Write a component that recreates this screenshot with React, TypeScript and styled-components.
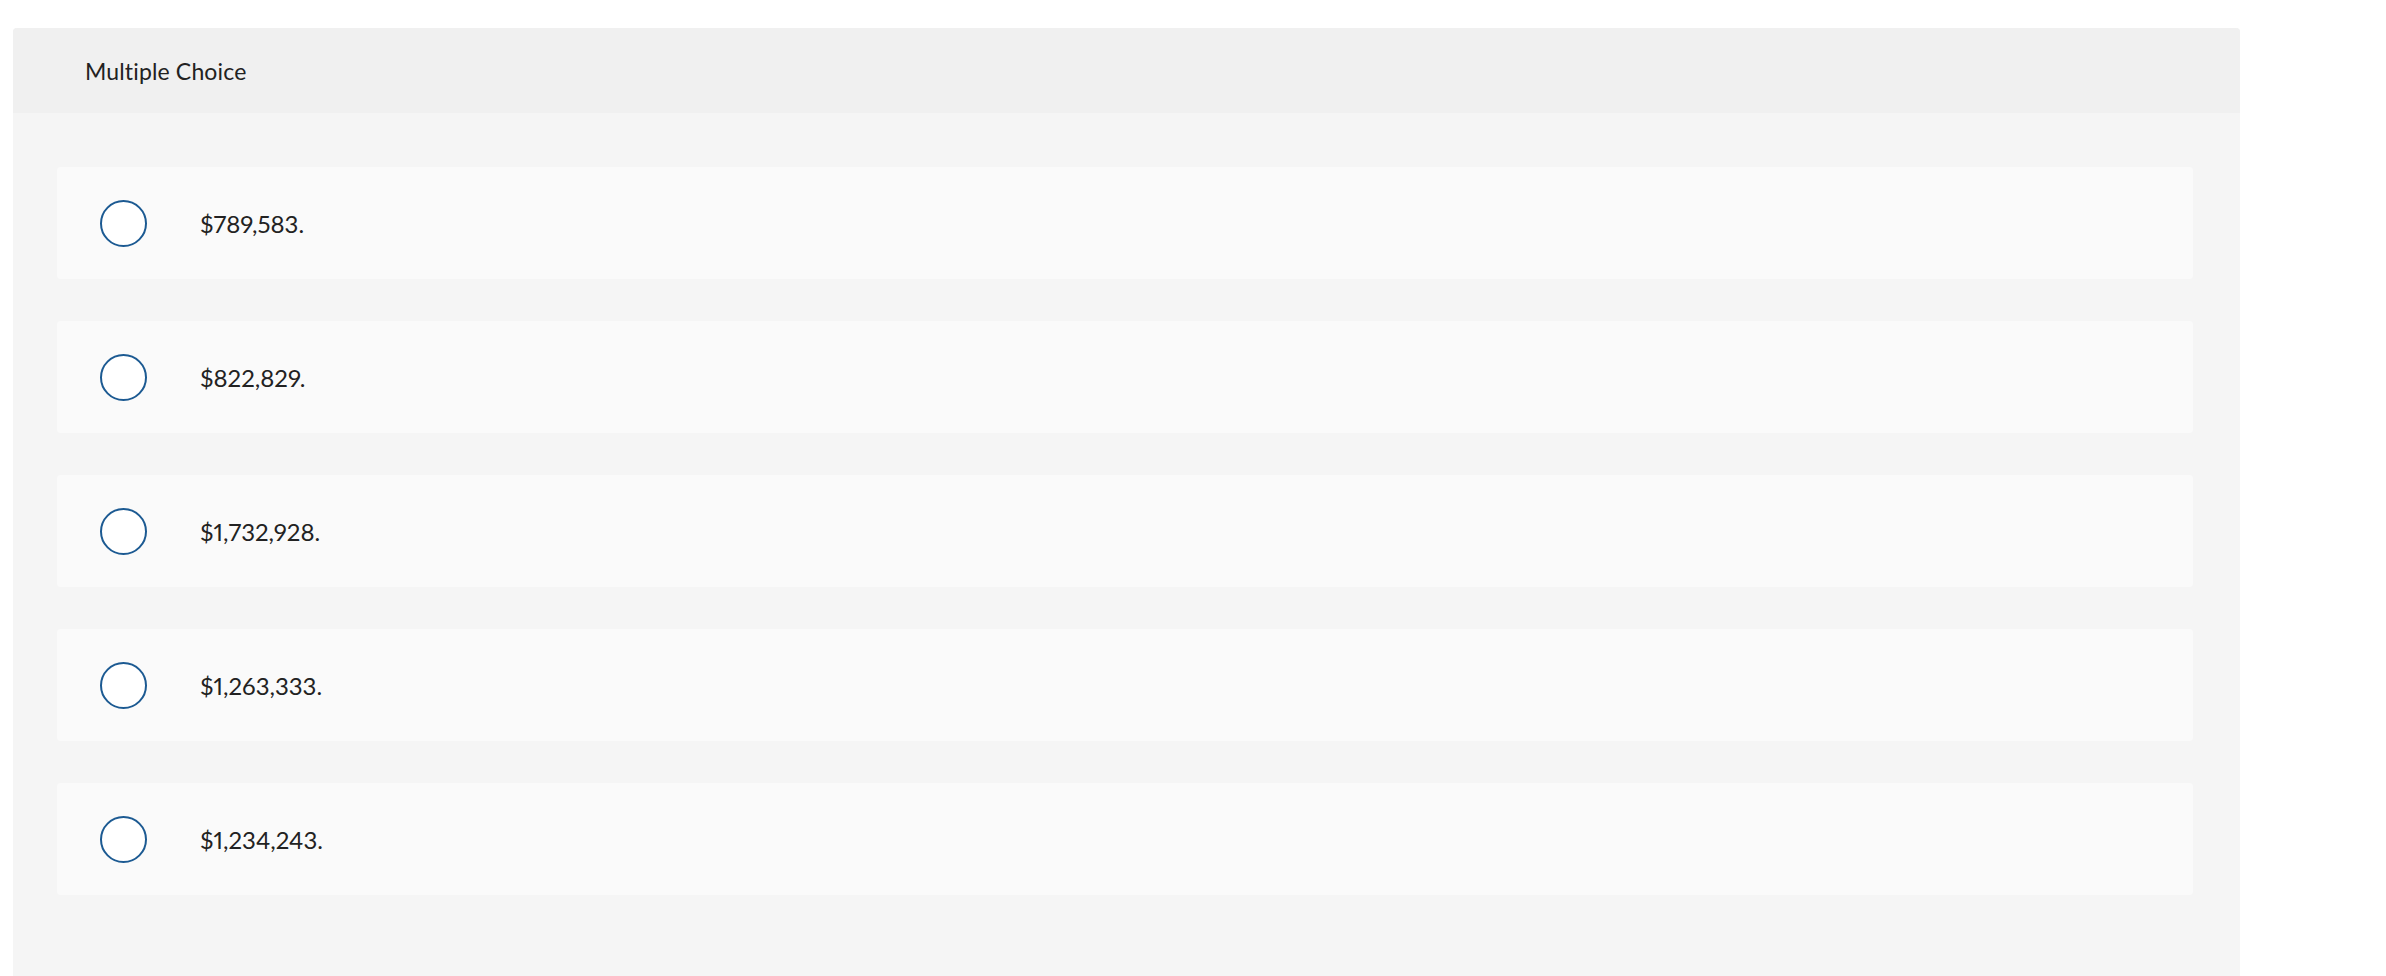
import React from "react";
import styled, { createGlobalStyle } from "styled-components";

const GlobalStyle = createGlobalStyle`
  html, body {
    margin: 0;
    padding: 0;
    background: #ffffff;
  }
  body {
    font-family: Lato, "Open Sans", "Liberation Sans", sans-serif;
    color: #222222;
  }
`;

const Page = styled.div`
  padding: 28px 0 0 13px;
  width: 2227px;
`;

const Panel = styled.section`
  background: #f5f5f5;
  border-radius: 4px 4px 0 0;
  overflow: hidden;
  min-height: 948px;
`;

const Header = styled.header`
  height: 85px;
  background: #f0f0f0;
  display: flex;
  align-items: center;
  padding-left: 72px;
  font-size: 23px;
  color: #222222;
  letter-spacing: 0.15px;
`;

const Options = styled.div`
  display: flex;
  flex-direction: column;
  gap: 42px;
  padding: 54px 47px 60px 44px;
`;

const Option = styled.label`
  height: 112px;
  background: #fafafa;
  border-radius: 4px;
  display: flex;
  align-items: center;
  padding-left: 43px;
  cursor: pointer;
`;

const Radio = styled.span`
  width: 47px;
  height: 47px;
  box-sizing: border-box;
  border: 2px solid #1c5a92;
  border-radius: 50%;
  background: #ffffff;
  flex-shrink: 0;
`;

const Label = styled.span`
  margin-left: 53px;
  font-size: 24px;
  color: #222222;
  font-variant-numeric: proportional-nums;
  font-feature-settings: "pnum" 1;
  letter-spacing: 0px;
`;

const choices = ["$789,583.", "$822,829.", "$1,732,928.", "$1,263,333.", "$1,234,243."];

export default function App() {
  return (
    <>
      <GlobalStyle />
      <Page>
        <Panel>
          <Header>Multiple Choice</Header>
          <Options>
            {choices.map((c) => (
              <Option key={c}>
                <Radio />
                <Label>{c}</Label>
              </Option>
            ))}
          </Options>
        </Panel>
      </Page>
    </>
  );
}
